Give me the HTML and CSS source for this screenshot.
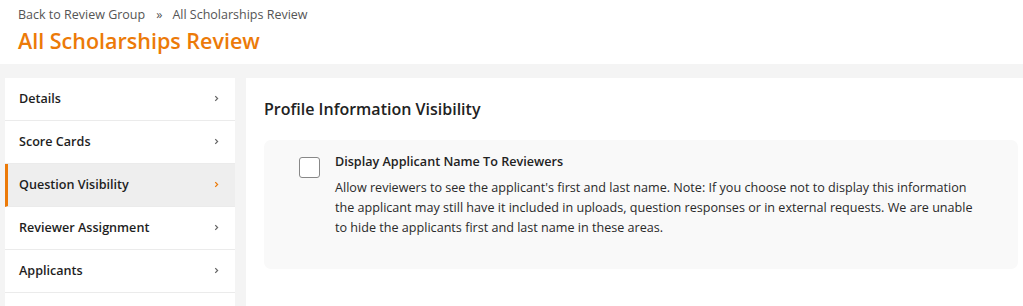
FILE: index.html
```html
<!DOCTYPE html>
<html>
<head>
<meta charset="utf-8">
<link rel="stylesheet" href="styles.css">
</head>
<body>
<header class="header">
  <div class="crumbs"><a class="crumb">Back to Review Group</a><span class="sep">»</span><span class="crumb">All Scholarships Review</span></div>
  <h1 class="title">All Scholarships Review</h1>
</header>
<div class="body">
  <nav class="side">
    <div class="item"><span>Details</span><svg class="chev" viewBox="0 0 6 8"><path d="M1.5 1.2 L4.3 4 L1.5 6.8" fill="none" stroke="currentColor" stroke-width="1.5"/></svg></div>
    <div class="item"><span>Score Cards</span><svg class="chev" viewBox="0 0 6 8"><path d="M1.5 1.2 L4.3 4 L1.5 6.8" fill="none" stroke="currentColor" stroke-width="1.5"/></svg></div>
    <div class="item active"><span>Question Visibility</span><svg class="chev" viewBox="0 0 6 8"><path d="M1.5 1.2 L4.3 4 L1.5 6.8" fill="none" stroke="currentColor" stroke-width="1.5"/></svg></div>
    <div class="item"><span>Reviewer Assignment</span><svg class="chev" viewBox="0 0 6 8"><path d="M1.5 1.2 L4.3 4 L1.5 6.8" fill="none" stroke="currentColor" stroke-width="1.5"/></svg></div>
    <div class="item"><span>Applicants</span><svg class="chev" viewBox="0 0 6 8"><path d="M1.5 1.2 L4.3 4 L1.5 6.8" fill="none" stroke="currentColor" stroke-width="1.5"/></svg></div>
    <div class="item last"></div>
  </nav>
  <main class="main">
    <h2 class="heading">Profile Information Visibility</h2>
    <div class="card">
      <span class="box"></span>
      <div class="text">
        <div class="label">Display Applicant Name To Reviewers</div>
        <p class="desc">Allow reviewers to see the applicant's first and last name. Note: If you choose not to display this information the applicant may still have it included in uploads, question responses or in external requests. We are unable to hide the applicants first and last name in these areas.</p>
      </div>
    </div>
  </main>
</div>
</body>
</html>
```

FILE: styles.css
```css
* { box-sizing: border-box; }
html, body { margin: 0; padding: 0; }
body {
  font-family: "Open Sans", "Liberation Sans", sans-serif;
  background: #f4f4f4;
  color: #222;
  height: 306px;
  overflow: hidden;
}
.header {
  background: #fff;
  height: 64px;
  padding: 6px 0 0 18px;
}
.crumbs {
  font-size: 12.5px;
  line-height: 18px;
  color: #555;
}
.crumb { color: #555; }
.sep { margin: 0 10px 0 11px; }
.title {
  margin: 2px 0 0 0;
  font-size: 21.5px;
  line-height: 30px;
  font-weight: 600;
  color: #ec7a08;
}
.body {
  display: flex;
  gap: 11px;
  padding: 14px 0 0 5px;
  align-items: flex-start;
}
.side {
  width: 230px;
  background: #fff;
  flex: none;
}
.item {
  height: 43px;
  border-bottom: 1px solid #ebebeb;
  display: flex;
  align-items: center;
  justify-content: space-between;
  padding: 0 16px 2px 14px;
  font-size: 12.6px;
  font-weight: 600;
  color: #1e1e1e;
}
.item.last { height: 13px; border-bottom: 0; }
.item.active {
  background: #eee;
  border-left: 3px solid #ec7a08;
  padding-left: 11px;
}
.chev { width: 5px; height: 7px; color: #666; }
.active .chev { color: #ec7a08; }
.main {
  flex: 1;
  background: #fff;
  height: 228px;
  padding: 19px 5px 0 18px;
}
.heading {
  margin: 0;
  font-size: 16px;
  line-height: 24px;
  font-weight: 600;
  color: #222;
}
.card {
  margin-top: 19px;
  background: #f9f9f9;
  border-radius: 7px;
  height: 129px;
  display: flex;
  padding: 14px 0 0 35px;
}
.box {
  width: 21px;
  height: 21px;
  border: 1px solid #888;
  border-radius: 3px;
  background: #fff;
  flex: none;
  margin-top: 3px;
}
.text { margin-left: 15px; width: 642px; }
.label {
  font-size: 12.6px;
  font-weight: 600;
  line-height: 16px;
  color: #222;
}
.desc {
  margin: 8px 0 0 0;
  font-size: 12.6px;
  line-height: 20px;
  color: #2a2a2a;
}
```
